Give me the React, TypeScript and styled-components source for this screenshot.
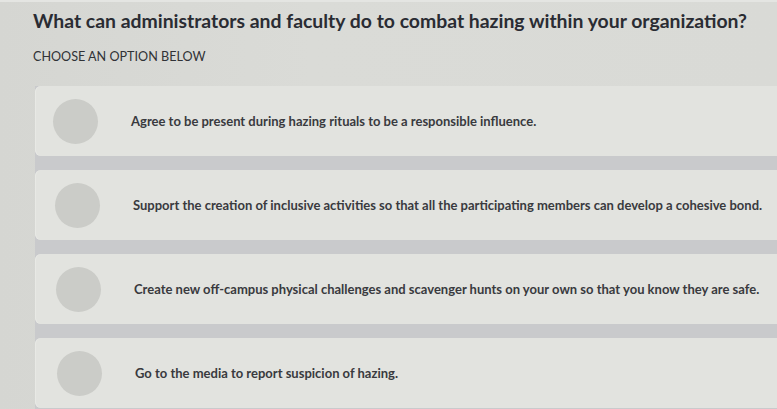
import React from "react";
import styled, { createGlobalStyle } from "styled-components";

const Global = createGlobalStyle`
  html, body { margin: 0; padding: 0; }
  body {
    background: #d9dad6;
    font-family: Lato, "Open Sans", sans-serif;
    overflow: hidden;
  }
`;

const Page = styled.div`
  width: 777px;
  height: 409px;
  overflow: hidden;
  display: flex;
  flex-direction: column;
  background: linear-gradient(90deg, #d5d6d2 0%, #dadbd7 40%, #d9dad6 100%);
  border-top: 2px solid #e4e5e2;
  box-sizing: border-box;
`;

const Header = styled.header`
  padding: 8px 0 0 33px;
  height: 84px;
  box-sizing: border-box;
  flex-shrink: 0;
`;

const Title = styled.h1`
  margin: 0;
  font-size: 19.4px;
  line-height: 22px;
  font-weight: 700;
  color: #2a2c33;
  white-space: nowrap;
`;

const Subtitle = styled.div`
  margin-top: 18px;
  font-size: 12.6px;
  line-height: 14px;
  font-weight: 400;
  color: #303236;
  text-transform: uppercase;
`;

const List = styled.div`
  margin-left: 35px;
  display: flex;
  flex-direction: column;
  gap: 14px;
  background: #c9cacc;
  flex: 1;
  overflow: hidden;
`;

const Card = styled.div<{ $shift: number }>`
  height: 70px;
  flex-shrink: 0;
  display: flex;
  align-items: center;
  gap: 33px;
  padding-left: ${(p) => 18 + p.$shift}px;
  background: #e2e3df;
  border-radius: 6px 0 0 6px;
  box-shadow: inset 1px 0 0 #e8e9e5;
`;

const Radio = styled.div`
  width: 45px;
  height: 45px;
  border-radius: 50%;
  background: #cbccc8;
  flex-shrink: 0;
`;

const OptionText = styled.span`
  font-size: 13px;
  font-weight: 700;
  color: #393a3e;
  white-space: nowrap;
`;

const options = [
  "Agree to be present during hazing rituals to be a responsible influence.",
  "Support the creation of inclusive activities so that all the participating members can develop a cohesive bond.",
  "Create new off-campus physical challenges and scavenger hunts on your own so that you know they are safe.",
  "Go to the media to report suspicion of hazing.",
];

export default function App() {
  return (
    <>
      <Global />
      <Page>
        <Header>
          <Title>What can administrators and faculty do to combat hazing within your organization?</Title>
          <Subtitle>Choose an option below</Subtitle>
        </Header>
        <List>
          {options.map((o, i) => (
            <Card key={o} $shift={i === 0 ? 0 : i + 1}>
              <Radio />
              <OptionText>{o}</OptionText>
            </Card>
          ))}
        </List>
      </Page>
    </>
  );
}
